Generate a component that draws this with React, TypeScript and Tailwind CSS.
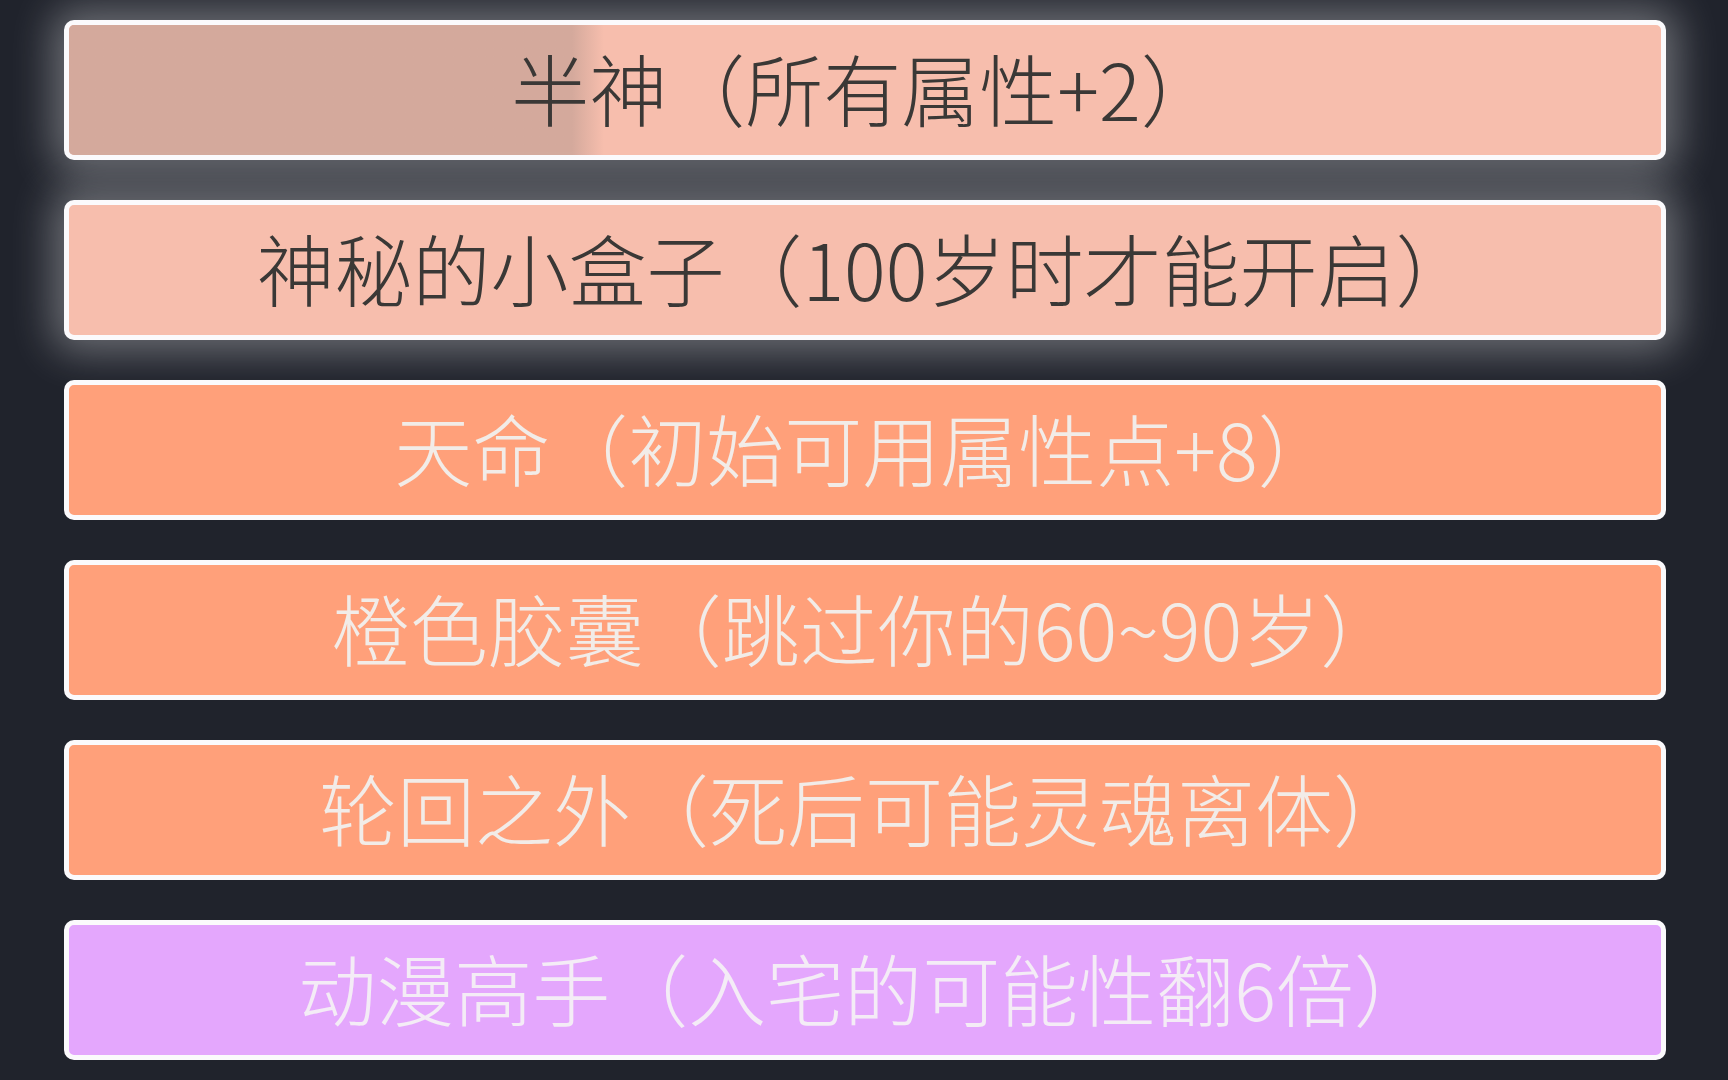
import React from "react";

type Talent = {
  label: string;
  bg: string;
  text: string;
  glow?: boolean;
  progress?: boolean;
};

const talents: Talent[] = [
  { label: "半神（所有属性+2）", bg: "bg-[#f7bead]", text: "text-[#3a3836]", glow: true, progress: true },
  { label: "神秘的小盒子（100岁时才能开启）", bg: "bg-[#f7bead]", text: "text-[#3a3836]", glow: true },
  { label: "天命（初始可用属性点+8）", bg: "bg-[#ffa07a]", text: "text-[#f2ece8]" },
  { label: "橙色胶囊（跳过你的60~90岁）", bg: "bg-[#ffa07a]", text: "text-[#f2ece8]" },
  { label: "轮回之外（死后可能灵魂离体）", bg: "bg-[#ffa07a]", text: "text-[#f2ece8]" },
  { label: "动漫高手（入宅的可能性翻6倍）", bg: "bg-[#e4a7fd]", text: "text-[#f4ecf6]" },
];

export default function App() {
  return (
    <div
      className="min-h-screen w-full bg-[#20232c] flex flex-col gap-[40px] pt-[20px] pb-[20px] pl-[64px] pr-[62px]"
      style={{ fontFamily: '"Noto Sans CJK SC", "Noto Sans", sans-serif' }}
    >
      {talents.map((t, i) => (
        <div
          key={i}
          className={`relative h-[140px] w-full overflow-hidden rounded-[10px] border-[5px] border-[#fbfafc] ${t.bg} ${
            t.glow ? "shadow-[0_0_40px_12px_rgba(255,255,255,0.34)]" : ""
          } flex items-center justify-center`}
        >
          {t.progress && (
            <div className="absolute inset-y-0 left-0 w-[535px] bg-gradient-to-r from-[#d4a99c] from-[94%] to-[#f7bead]" />
          )}
          <span className={`relative text-[78px] leading-none font-light ${t.text} -mt-[6px]`}>
            {t.label}
          </span>
        </div>
      ))}
    </div>
  );
}
